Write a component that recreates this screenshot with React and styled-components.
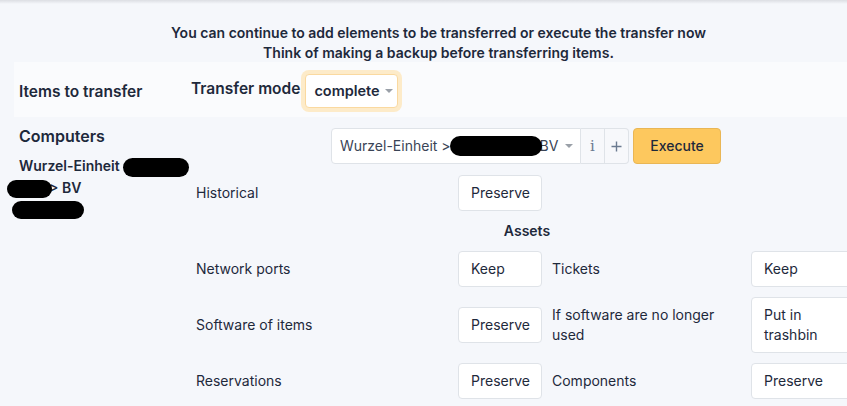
import React from "react";
import styled, { createGlobalStyle } from "styled-components";

const Global = createGlobalStyle`
  html, body { margin: 0; padding: 0; background: #f5f7fb; }
  body {
    font-family: Inter, "Noto Sans", sans-serif;
    font-size: 14px;
    line-height: 20px;
    color: #1e293b;
    overflow: hidden;
  }
  #root { width: 847px; height: 406px; overflow: hidden; }
`;

const TopShadow = styled.div`
  height: 4px;
  background: linear-gradient(#dcdee3, #f5f7fb);
`;

const Page = styled.div`
  padding: 19px 0 0 14px;
`;

const Container = styled.div`
  width: 849px;
`;

const Notice = styled.div`
  height: 39px;
  text-align: center;
  font-weight: 600;
  line-height: 20px;
`;

const Band = styled.div`
  display: grid;
  grid-template-columns: 177px 1fr;
  align-items: center;
  height: 55px;
  background: #fafbfd;
`;

const BandTitle = styled.div`
  padding-left: 5px;
  font-size: 15.5px;
  font-weight: 600;
  padding-top: 4px;
`;

const ModeCell = styled.div`
  display: flex;
  align-items: center;
  gap: 5px;
`;

const ModeLabel = styled.span`
  font-size: 15.5px;
  font-weight: 600;
  margin-top: -1px;
`;

const ModeSelect = styled.div`
  box-sizing: border-box;
  display: flex;
  align-items: center;
  width: 93px;
  height: 34px;
  padding: 0 8px;
  background: #fff;
  border: 1px solid #fad9a0;
  border-radius: 4px;
  box-shadow: 0 0 0 4px #fdebc9;
  font-weight: 600;
  font-size: 14.5px;
  margin-top: 2px;
`;

const Caret = styled.span`
  width: 0;
  height: 0;
  border-left: 4px solid transparent;
  border-right: 4px solid transparent;
  border-top: 4px solid #9aa0a8;
  margin-left: 5px;
`;

const Main = styled.div`
  display: grid;
  grid-template-columns: 177px 672px;
  padding-top: 6px;
`;

const Side = styled.div`
  padding: 1px 5px 0;
`;

const SideTitle = styled.div`
  font-size: 16px;
  font-weight: 600;
  line-height: 24px;
  margin-bottom: 7px;
`;

const SideLine = styled.div`
  font-weight: 600;
  line-height: 21px;
  white-space: nowrap;
`;

const Blob = styled.span`
  position: relative;
  z-index: 1;
  display: inline-block;
  vertical-align: middle;
  width: ${(p) => p.w}px;
  height: ${(p) => p.h}px;
  margin-left: ${(p) => p.ml || 0}px;
  background: #000;
  border-radius: 10px;
`;

const Tail = styled.span`
  margin-left: ${(p) => p.ml || 0}px;
`;

const Right = styled.div`
  display: flex;
  flex-direction: column;
`;

const TopRow = styled.div`
  display: flex;
  justify-content: center;
  padding: 5px 5px 6px 3px;
`;

const Picker = styled.div`
  display: flex;
  height: 36px;
`;

const PickerSelect = styled.div`
  box-sizing: border-box;
  width: 250px;
  display: flex;
  align-items: center;
  padding: 0 7px 0 8px;
  background: #fff;
  border: 1px solid #dfe3e8;
  border-radius: 4px 0 0 4px;
  color: #3a4456;
  white-space: nowrap;
`;

const PickerCaret = styled(Caret)`
  margin-left: auto;
`;

const IconBtn = styled.div`
  box-sizing: border-box;
  width: 24px;
  display: flex;
  align-items: center;
  justify-content: center;
  background: #f7f8fb;
  border: 1px solid #dfe3e8;
  border-left: none;
  border-radius: ${(p) => (p.last ? "0 4px 4px 0" : "0")};
  color: #6b7a90;
`;

const InfoGlyph = styled.span`
  font-family: "DejaVu Serif", "Liberation Serif", serif;
  font-size: 15px;
  line-height: 1;
  margin-top: 1px;
`;

const ExecuteBtn = styled.div`
  box-sizing: border-box;
  width: 88px;
  margin-left: 4px;
  display: flex;
  align-items: center;
  justify-content: center;
  background: #fdc85e;
  border: 1px solid #e9b655;
  border-radius: 4px;
  font-weight: 500;
  color: #1e293b;
`;

const Row = styled.div`
  display: grid;
  grid-template-columns: 262px 94px 199px 117px;
  align-items: center;
`;

const Cell = styled.div`
  padding: 5px;
`;

const Label = styled(Cell)``;

const Section = styled.div`
  padding: 5px;
  text-align: center;
  font-weight: 600;
`;

const Choice = styled.div`
  box-sizing: border-box;
  width: 100%;
  padding: 7px 12px;
  line-height: 20px;
  background: #fff;
  border: 1px solid #dfe3e8;
  border-radius: 4px;
`;

function PlusIcon() {
  return (
    <svg width="11" height="11" viewBox="0 0 11 11" aria-hidden="true">
      <path d="M5.5 0.5v10M0.5 5.5h10" stroke="#6b7a90" strokeWidth="1.4" fill="none" />
    </svg>
  );
}

const rows = [
  { a: "Network ports", av: "Keep", b: "Tickets", bv: "Keep" },
  { a: "Software of items", av: "Preserve", b: "If software are no longer used", bv: "Put in trashbin" },
  { a: "Reservations", av: "Preserve", b: "Components", bv: "Preserve" },
];

export default function App() {
  return (
    <>
      <Global />
      <TopShadow />
      <Page>
        <Container>
          <Notice>
            You can continue to add elements to be transferred or execute the transfer now
            <br />
            Think of making a backup before transferring items.
          </Notice>
          <Band>
            <BandTitle>Items to transfer</BandTitle>
            <ModeCell>
              <ModeLabel>Transfer mode</ModeLabel>
              <ModeSelect>
                complete
                <Caret />
              </ModeSelect>
            </ModeCell>
          </Band>
          <Main>
            <Side>
              <SideTitle>Computers</SideTitle>
              <SideLine>
                Wurzel-Einheit <Blob w={66} h={19} />
              </SideLine>
              <SideLine>
                <Blob w={45} h={18} ml={-12} />
                <Tail ml={-3}>&gt; BV</Tail>
              </SideLine>
              <SideLine>
                <Blob w={72} h={18} ml={-7} />
              </SideLine>
            </Side>
            <Right>
              <TopRow>
                <Picker>
                  <PickerSelect>
                    Wurzel-Einheit &gt;
                    <Blob w={92} h={20} ml={-1} />
                    <Tail ml={-2}>BV</Tail>
                    <PickerCaret />
                  </PickerSelect>
                  <IconBtn>
                    <InfoGlyph>i</InfoGlyph>
                  </IconBtn>
                  <IconBtn last>
                    <PlusIcon />
                  </IconBtn>
                </Picker>
                <ExecuteBtn>Execute</ExecuteBtn>
              </TopRow>
              <Row>
                <Label>Historical</Label>
                <Cell>
                  <Choice>Preserve</Choice>
                </Cell>
              </Row>
              <Section>Assets</Section>
              {rows.map((r) => (
                <Row key={r.a}>
                  <Label>{r.a}</Label>
                  <Cell>
                    <Choice>{r.av}</Choice>
                  </Cell>
                  <Label>{r.b}</Label>
                  <Cell>
                    <Choice>{r.bv}</Choice>
                  </Cell>
                </Row>
              ))}
            </Right>
          </Main>
        </Container>
      </Page>
    </>
  );
}
